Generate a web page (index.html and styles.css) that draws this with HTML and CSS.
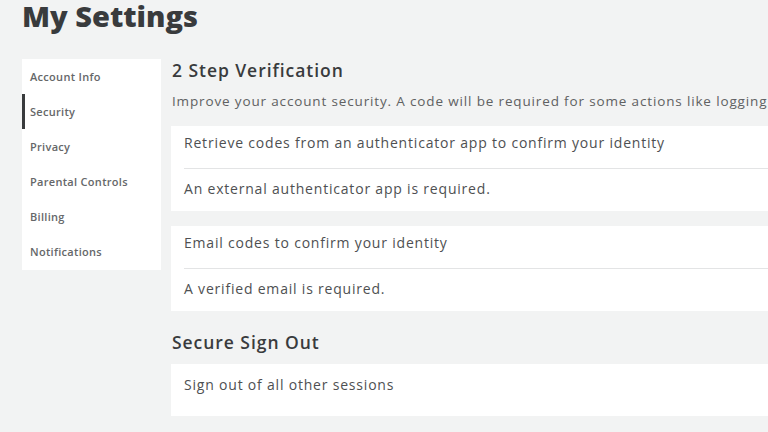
FILE: index.html
```html
<!DOCTYPE html>
<html>
<head>
<meta charset="utf-8">
<link rel="stylesheet" href="styles.css">
</head>
<body>
<div class="page">
  <h1 class="title">My Settings</h1>
  <div class="layout">
    <nav class="sidebar">
      <div class="nav-item">Account Info</div>
      <div class="nav-item active">Security</div>
      <div class="nav-item">Privacy</div>
      <div class="nav-item">Parental Controls</div>
      <div class="nav-item">Billing</div>
      <div class="nav-item">Notifications</div>
    </nav>
    <main class="content">
      <h2 class="section-title">2 Step Verification</h2>
      <p class="section-desc">Improve your account security. A code will be required for some actions like logging in</p>
      <div class="card">
        <div class="row">Retrieve codes from an authenticator app to confirm your identity</div>
        <div class="row sub">An external authenticator app is required.</div>
      </div>
      <div class="card">
        <div class="row">Email codes to confirm your identity</div>
        <div class="row sub">A verified email is required.</div>
      </div>
      <h2 class="section-title second">Secure Sign Out</h2>
      <div class="card single">
        <div class="row">Sign out of all other sessions</div>
      </div>
    </main>
  </div>
</div>
</body>
</html>
```
FILE: styles.css
```css
html, body {
  margin: 0;
  padding: 0;
  background: #f2f3f3;
  overflow: hidden;
}
body {
  width: 768px;
  height: 432px;
  font-family: "Open Sans", "Liberation Sans", sans-serif;
  color: #393b3d;
}
.page {
  padding: 0 0 0 22px;
}
.title {
  margin: -1px 0 0 0;
  font-size: 29px;
  line-height: 34px;
  font-weight: 800;
  color: #393b3d;
}
.layout {
  display: flex;
  gap: 10px;
  margin-top: 26px;
  align-items: flex-start;
}
.sidebar {
  width: 139px;
  background: #fff;
  display: flex;
  flex-direction: column;
  height: 211px;
}
.nav-item {
  height: 35px;
  line-height: 35px;
  padding-left: 5px;
  font-size: 11px;
  font-weight: 600;
  letter-spacing: 0.3px;
  color: #656769;
  border-left: 3px solid transparent;
}
.nav-item.active {
  border-left-color: #393b3d;
}
.content {
  flex: 1;
  min-width: 0;
  white-space: nowrap;
}
.section-title {
  margin: 0;
  font-size: 17.5px;
  line-height: 22px;
  font-weight: 600;
  letter-spacing: 0.95px;
  color: #393b3d;
  padding-left: 1px;
}
.section-desc {
  margin: 11px 0 0 1px;
  font-size: 13.5px;
  line-height: 18px;
  letter-spacing: 0.85px;
  color: #606162;
}
.card {
  background: #fff;
  margin-top: 16px;
  padding: 0 0 0 13px;
  margin-right: -200px;
}
.card + .card {
  margin-top: 15px;
}
.row {
  font-size: 14px;
  letter-spacing: 0.8px;
  color: #4e5052;
  height: 42px;
  line-height: 34px;
  border-bottom: 1px solid #e3e4e5;
}
.row.sub {
  border-bottom: none;
  line-height: 40px;
}
.card.single .row {
  border-bottom: none;
  height: 52px;
  line-height: 42px;
}
.section-title.second {
  margin-top: 20px;
}
.section-title.second + .card {
  margin-top: 11px;
}
```
